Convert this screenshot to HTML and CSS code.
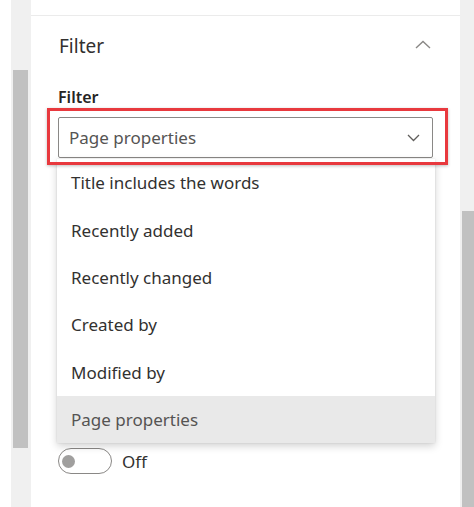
FILE: index.html
```html
<!DOCTYPE html>
<html lang="en">
<head>
<meta charset="utf-8">
<title>Filter</title>
<link rel="stylesheet" href="styles.css">
</head>
<body>
<div class="page">
  <div class="left-gutter">
    <div class="left-track"><div class="left-thumb"></div></div>
  </div>
  <div class="panel">
    <div class="top-line"></div>
    <div class="section">
      <div class="section-header">
        <span class="section-title">Filter</span>
        <svg class="chev-up" width="16" height="9" viewBox="0 0 16 9"><path d="M1 8 L8 1.5 L15 8" fill="none" stroke="#8a8886" stroke-width="1.4"/></svg>
      </div>
      <div class="field-label">Filter</div>
      <div class="field">
        <div class="dropdown">
          <span class="dropdown-value">Page properties</span>
          <svg class="chev-down" width="13" height="8" viewBox="0 0 13 8"><path d="M1 1 L6.5 6.5 L12 1" fill="none" stroke="#605e5c" stroke-width="1.3"/></svg>
        </div>
        <div class="menu">
          <div class="menu-item">Title includes the words</div>
          <div class="menu-item">Recently added</div>
          <div class="menu-item">Recently changed</div>
          <div class="menu-item">Created by</div>
          <div class="menu-item">Modified by</div>
          <div class="menu-item selected">Page properties</div>
        </div>
        <div class="highlight-box"></div>
      </div>
      <div class="toggle-row">
        <div class="toggle"><div class="knob"></div></div>
        <span class="toggle-text">Off</span>
      </div>
    </div>
  </div>
  <div class="right-gutter"><div class="right-thumb"></div></div>
</div>
</body>
</html>
```
FILE: styles.css
```css
html, body {
  margin: 0;
  padding: 0;
  background: #ffffff;
}
body {
  font-family: "Noto Sans", "Open Sans", sans-serif;
  color: #323130;
}
.page {
  display: flex;
  width: 474px;
  height: 507px;
  overflow: hidden;
}
.left-gutter {
  width: 20px;
  margin-left: 11px;
  background: #f0f0f0;
  flex-shrink: 0;
}
.left-track {
  padding-top: 70px;
  padding-left: 2px;
  padding-right: 3px;
}
.left-thumb {
  height: 378px;
  background: #c1c1c1;
}
.panel {
  flex: 1;
  background: #ffffff;
  min-width: 0;
}
.top-line {
  height: 15px;
  border-bottom: 1px solid #ebebeb;
}
.section {
  padding-left: 27px;
  padding-right: 27px;
}
.section-header {
  display: flex;
  align-items: center;
  justify-content: space-between;
  height: 60px;
  padding-left: 1px;
}
.section-title {
  font-size: 19px;
  line-height: 24px;
}
.chev-up {
  margin-right: 2px;
  margin-top: -4px;
}
.field-label {
  margin-top: 11px;
  font-size: 16px;
  font-weight: 600;
  line-height: 20px;
  color: #252423;
}
.field {
  position: relative;
  margin-top: 10px;
}
.dropdown {
  box-sizing: border-box;
  width: 375px;
  height: 41px;
  border: 1px solid #8a8886;
  border-radius: 2px;
  display: flex;
  align-items: center;
  justify-content: space-between;
  padding-left: 10px;
  padding-right: 12px;
}
.dropdown-value {
  font-size: 17px;
  color: #555453;
}
.menu {
  width: 378px;
  margin-left: -1px;
  margin-top: 1px;
  background: #ffffff;
  box-shadow: 0 3px 8px rgba(0, 0, 0, 0.18), 0 0 2px rgba(0, 0, 0, 0.1);
}
.menu-item {
  height: 47.4px;
  display: flex;
  align-items: center;
  padding-left: 14px;
  font-size: 17px;
  color: #323130;
}
.menu-item.selected {
  background: #e9e9e9;
  color: #555453;
}
.highlight-box {
  position: absolute;
  left: -11px;
  top: -9px;
  width: 401px;
  height: 57px;
  box-sizing: border-box;
  border: 3px solid #e8393e;
  box-shadow: 0 1px 3px rgba(0, 0, 0, 0.25);
}
.toggle-row {
  display: flex;
  align-items: center;
  margin-top: 5px;
}
.toggle {
  box-sizing: border-box;
  width: 54px;
  height: 26px;
  border: 1.5px solid #8a8886;
  border-radius: 13px;
  display: flex;
  align-items: center;
  padding-left: 3px;
}
.knob {
  width: 13px;
  height: 13px;
  border-radius: 50%;
  background: #a09f9e;
}
.toggle-text {
  margin-left: 10px;
  font-size: 17px;
  color: #323130;
}
.right-gutter {
  width: 14px;
  background: #f0f0f0;
  flex-shrink: 0;
  padding-top: 211px;
  box-sizing: border-box;
}
.right-thumb {
  margin-left: 2px;
  height: 296px;
  background: #c1c1c1;
}
```
